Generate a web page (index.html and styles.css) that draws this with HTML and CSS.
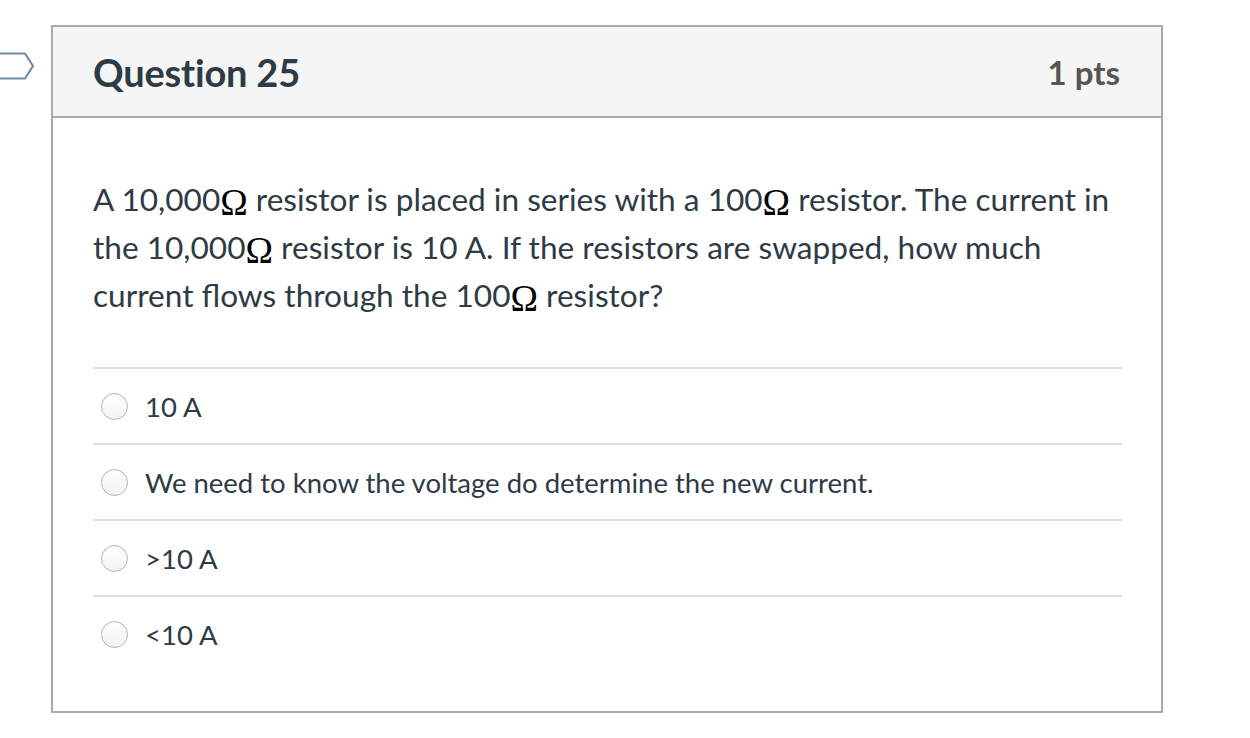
FILE: index.html
```html
<!DOCTYPE html>
<html lang="en">
<head>
<meta charset="utf-8">
<title>Question 25</title>
<link rel="stylesheet" href="styles.css">
</head>
<body>
<div class="page">
  <div class="marker">
    <svg class="marker-icon" width="36" height="30" viewBox="0 0 36 30">
      <path d="M-2 1.5 H25 L33 14 L25 26.5 H-2" fill="none" stroke="#6e8ca3" stroke-width="2.2" stroke-linejoin="round"/>
    </svg>
  </div>
  <div class="question">
    <div class="q-header">
      <h2 class="q-title">Question 25</h2>
      <div class="q-points">1 pts</div>
    </div>
    <div class="q-body">
      <p class="q-text">A 10,000<span class="ohm">Ω</span> resistor is placed in series with a 100<span class="ohm">Ω</span> resistor. The current in the 10,000<span class="ohm">Ω</span> resistor is 10 A. If the resistors are swapped, how much current flows through the 100<span class="ohm">Ω</span> resistor?</p>
      <div class="answers">
        <label class="answer"><span class="radio"></span><span class="answer-text">10 A</span></label>
        <label class="answer"><span class="radio"></span><span class="answer-text">We need to know the voltage do determine the new current.</span></label>
        <label class="answer"><span class="radio"></span><span class="answer-text">&gt;10 A</span></label>
        <label class="answer"><span class="radio"></span><span class="answer-text">&lt;10 A</span></label>
      </div>
    </div>
  </div>
</div>
</body>
</html>
```

FILE: styles.css
```css
html, body {
  margin: 0;
  padding: 0;
  background: #ffffff;
}

body {
  font-family: Lato, "Open Sans", sans-serif;
  color: #2d3b45;
}

.page {
  display: flex;
  align-items: flex-start;
  padding-top: 25px;
}

.marker {
  width: 51px;
  flex: none;
  padding-top: 27px;
}

.marker-icon {
  display: block;
}

.question {
  width: 1108px;
  border: 2px solid #aaaaaa;
  flex: none;
}

.q-header {
  height: 89px;
  background: #f5f5f5;
  border-bottom: 2px solid #aaaaaa;
  display: flex;
  align-items: center;
  justify-content: space-between;
  padding: 0 41px 0 40px;
}

.q-title {
  margin: 0;
  font-size: 38px;
  font-weight: 700;
  color: #2d3b45;
  letter-spacing: -0.2px;
}

.q-points {
  font-size: 33px;
  font-weight: 700;
  color: #555555;
}

.q-body {
  padding: 57px 39px 40px 40px;
}

.q-text {
  margin: 0 0 48px 0;
  font-size: 31.6px;
  line-height: 48px;
  color: #2d3b45;
}

.ohm {
  font-family: "Liberation Serif", "DejaVu Serif", serif;
  color: #000000;
  font-size: 37px;
  line-height: 0;
  position: relative;
  top: 4px;
}

.answers {
  display: flex;
  flex-direction: column;
}

.answer {
  display: flex;
  align-items: center;
  height: 74px;
  border-top: 2px solid #dddddd;
}

.radio {
  width: 27px;
  height: 27px;
  box-sizing: border-box;
  border-radius: 50%;
  border: 1px solid #b5b5b5;
  background: linear-gradient(#ffffff, #f3f3f3);
  box-shadow: inset 0 1px 1px rgba(0,0,0,0.05);
  margin-left: 8px;
  margin-right: 17px;
  flex: none;
}

.answer-text {
  font-size: 27.5px;
  color: #2d3b45;
}
```
